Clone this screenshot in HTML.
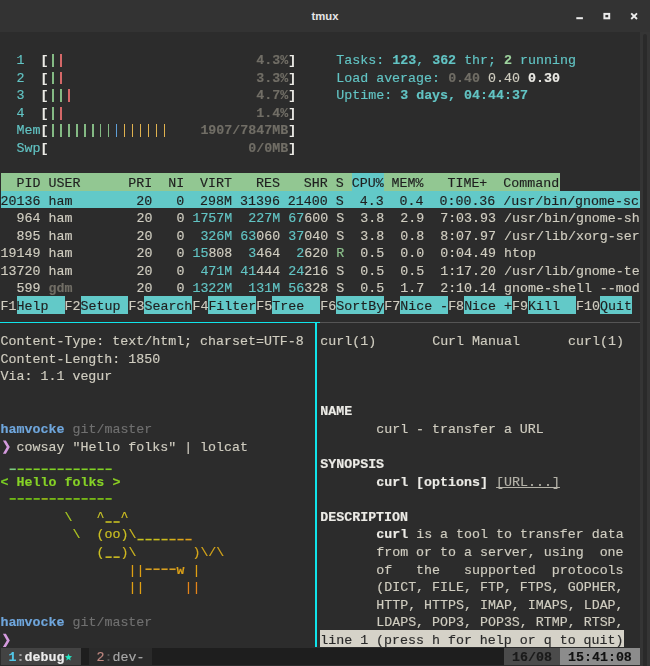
<!DOCTYPE html>
<html><head><meta charset="utf-8"><style>
html,body{margin:0;padding:0;}
body{width:650px;height:666px;overflow:hidden;position:relative;background:#353535;font-family:"Liberation Mono",monospace;}
#tb{position:absolute;left:0;top:0;width:650px;height:32px;background:#333333;}
#title{position:absolute;left:0;top:0;width:650px;height:32px;text-align:center;font:bold 11.3px/32px "Liberation Sans",sans-serif;color:#e6e6e6;}
#term{position:absolute;left:0;top:32px;width:640px;height:634px;background:#2c2c2c;}
#sb{position:absolute;left:643px;top:34px;width:4px;height:640px;background:#2a2a2a;border-radius:2px;}
.b{position:absolute;}
.s{position:absolute;white-space:pre;-webkit-text-stroke:0.15px;font-size:13.318px;line-height:17.575px;height:17.575px;}
.w{font-weight:bold;}
#txt{position:absolute;left:0;top:0;width:650px;height:666px;will-change:transform;}
.u{text-decoration:underline;text-underline-offset:1px;text-decoration-skip-ink:none;text-decoration-thickness:1px;}
</style></head><body>
<div id="tb"></div>
<div id="title">tmux</div>
<svg style="position:absolute;left:0;top:0" width="650" height="32">
<rect x="576.3" y="17.2" width="6.6" height="2" fill="#ececec"/>
<rect x="604.4" y="13.9" width="4.8" height="4.4" fill="none" stroke="#ececec" stroke-width="2"/>
<path d="M631.2 13.4 L637 19 M637 13.4 L631.2 19" stroke="#ececec" stroke-width="1.9"/>
</svg>
<div id="term"></div>
<div id="sb"></div>

<div class="b" style="left:0.60px;top:172.98px;width:559.44px;height:17.57px;background:#92c792"></div>
<div class="b" style="left:352.25px;top:172.98px;width:31.97px;height:17.57px;background:#62c9c8"></div>
<div class="b" style="left:0.60px;top:190.55px;width:639.36px;height:17.57px;background:#62c9c8"></div>
<div class="b" style="left:16.58px;top:296.00px;width:47.95px;height:17.57px;background:#62c9c8"></div>
<div class="b" style="left:80.52px;top:296.00px;width:47.95px;height:17.57px;background:#62c9c8"></div>
<div class="b" style="left:144.46px;top:296.00px;width:47.95px;height:17.57px;background:#62c9c8"></div>
<div class="b" style="left:208.39px;top:296.00px;width:47.95px;height:17.57px;background:#62c9c8"></div>
<div class="b" style="left:272.33px;top:296.00px;width:47.95px;height:17.57px;background:#62c9c8"></div>
<div class="b" style="left:336.26px;top:296.00px;width:47.95px;height:17.57px;background:#62c9c8"></div>
<div class="b" style="left:400.20px;top:296.00px;width:47.95px;height:17.57px;background:#62c9c8"></div>
<div class="b" style="left:464.14px;top:296.00px;width:47.95px;height:17.57px;background:#62c9c8"></div>
<div class="b" style="left:528.07px;top:296.00px;width:47.95px;height:17.57px;background:#62c9c8"></div>
<div class="b" style="left:600.00px;top:296.00px;width:31.97px;height:17.57px;background:#62c9c8"></div>
<div class="b" style="left:320.28px;top:629.93px;width:303.70px;height:17.57px;background:#d5d2c8"></div>
<div class="b" style="left:0.60px;top:647.50px;width:639.36px;height:17.57px;background:#1e1e1e"></div>
<div class="b" style="left:0.60px;top:647.50px;width:79.92px;height:17.57px;background:#434343"></div>
<div class="b" style="left:88.51px;top:647.50px;width:63.94px;height:17.57px;background:#2a2a2a"></div>
<div class="b" style="left:504.10px;top:647.50px;width:55.94px;height:17.57px;background:#4b4b4b"></div>
<div class="b" style="left:560.04px;top:647.50px;width:79.92px;height:17.57px;background:#8c8c8c"></div>
<div class="b" style="left:0;top:321.62px;width:320px;height:1.5px;background:#10e4ea"></div>
<div class="b" style="left:320px;top:321.62px;width:320px;height:1.5px;background:#555"></div>
<div class="b" style="left:315px;top:321.62px;width:2px;height:325.89px;background:#10e4ea"></div>
<div id="txt">
<div class="s" style="left:16.58px;top:51.95px;color:#62c4c4">1</div>
<div class="s w" style="left:40.56px;top:51.95px;color:#ecebe6">[</div>
<div class="s w" style="left:256.34px;top:51.95px;color:#716e66">4.3%</div>
<div class="s w" style="left:288.31px;top:51.95px;color:#ecebe6">]</div>
<div class="s" style="left:16.58px;top:69.53px;color:#62c4c4">2</div>
<div class="s w" style="left:40.56px;top:69.53px;color:#ecebe6">[</div>
<div class="s w" style="left:256.34px;top:69.53px;color:#716e66">3.3%</div>
<div class="s w" style="left:288.31px;top:69.53px;color:#ecebe6">]</div>
<div class="s" style="left:16.58px;top:87.10px;color:#62c4c4">3</div>
<div class="s w" style="left:40.56px;top:87.10px;color:#ecebe6">[</div>
<div class="s w" style="left:256.34px;top:87.10px;color:#716e66">4.7%</div>
<div class="s w" style="left:288.31px;top:87.10px;color:#ecebe6">]</div>
<div class="s" style="left:16.58px;top:104.68px;color:#62c4c4">4</div>
<div class="s w" style="left:40.56px;top:104.68px;color:#ecebe6">[</div>
<div class="s w" style="left:256.34px;top:104.68px;color:#716e66">1.4%</div>
<div class="s w" style="left:288.31px;top:104.68px;color:#ecebe6">]</div>
<div class="s" style="left:16.58px;top:122.25px;color:#62c4c4">Mem</div>
<div class="s w" style="left:40.56px;top:122.25px;color:#ecebe6">[</div>
<div class="s w" style="left:200.40px;top:122.25px;color:#716e66">1907/7847MB</div>
<div class="s w" style="left:288.31px;top:122.25px;color:#ecebe6">]</div>
<div class="s" style="left:16.58px;top:139.83px;color:#62c4c4">Swp</div>
<div class="s w" style="left:40.56px;top:139.83px;color:#ecebe6">[</div>
<div class="s w" style="left:248.35px;top:139.83px;color:#716e66">0/0MB</div>
<div class="s w" style="left:288.31px;top:139.83px;color:#ecebe6">]</div>
<div class="s" style="left:336.26px;top:51.95px;color:#62c4c4">Tasks:</div>
<div class="s w" style="left:392.21px;top:51.95px;color:#62c4c4">123</div>
<div class="s" style="left:416.18px;top:51.95px;color:#62c4c4">,</div>
<div class="s w" style="left:432.17px;top:51.95px;color:#62c4c4">362</div>
<div class="s" style="left:464.14px;top:51.95px;color:#62c4c4">thr;</div>
<div class="s w" style="left:504.10px;top:51.95px;color:#9ed39e">2</div>
<div class="s" style="left:520.08px;top:51.95px;color:#62c4c4">running</div>
<div class="s" style="left:336.26px;top:69.53px;color:#62c4c4">Load average:</div>
<div class="s w" style="left:448.15px;top:69.53px;color:#716e66">0.40</div>
<div class="s" style="left:488.11px;top:69.53px;color:#d0cdc0">0.40</div>
<div class="s w" style="left:528.07px;top:69.53px;color:#ecebe6">0.30</div>
<div class="s" style="left:336.26px;top:87.10px;color:#62c4c4">Uptime:</div>
<div class="s w" style="left:400.20px;top:87.10px;color:#62c4c4">3 days, 04:44:37</div>
<div class="s" style="left:0.60px;top:174.98px;color:#1f1f1f">  PID USER      PRI  NI  VIRT   RES   SHR S CPU% MEM%   TIME+  Command</div>
<div class="s" style="left:0.60px;top:192.55px;color:#1f1f1f">20136 ham        20   0  298M 31396 21400 S  4.3  0.4  0:00.36 /usr/bin/gnome-sc</div>
<div class="s" style="left:16.58px;top:210.13px;color:#d0cdc0">964</div>
<div class="s" style="left:48.55px;top:210.13px;color:#d0cdc0">ham</div>
<div class="s" style="left:136.46px;top:210.13px;color:#d0cdc0">20</div>
<div class="s" style="left:176.42px;top:210.13px;color:#d0cdc0">0</div>
<div class="s" style="left:192.41px;top:210.13px;color:#62c4c4">1757M</div>
<div class="s" style="left:248.35px;top:210.13px;color:#62c4c4">227M</div>
<div class="s" style="left:288.31px;top:210.13px;color:#62c4c4">67</div>
<div class="s" style="left:304.30px;top:210.13px;color:#d0cdc0">600</div>
<div class="s" style="left:336.26px;top:210.13px;color:#d0cdc0">S</div>
<div class="s" style="left:360.24px;top:210.13px;color:#d0cdc0">3.8</div>
<div class="s" style="left:400.20px;top:210.13px;color:#d0cdc0">2.9</div>
<div class="s" style="left:440.16px;top:210.13px;color:#d0cdc0">7:03.93</div>
<div class="s" style="left:504.10px;top:210.13px;color:#d0cdc0">/usr/bin/gnome-sh</div>
<div class="s" style="left:16.58px;top:227.70px;color:#d0cdc0">895</div>
<div class="s" style="left:48.55px;top:227.70px;color:#d0cdc0">ham</div>
<div class="s" style="left:136.46px;top:227.70px;color:#d0cdc0">20</div>
<div class="s" style="left:176.42px;top:227.70px;color:#d0cdc0">0</div>
<div class="s" style="left:200.40px;top:227.70px;color:#62c4c4">326M</div>
<div class="s" style="left:240.36px;top:227.70px;color:#62c4c4">63</div>
<div class="s" style="left:256.34px;top:227.70px;color:#d0cdc0">060</div>
<div class="s" style="left:288.31px;top:227.70px;color:#62c4c4">37</div>
<div class="s" style="left:304.30px;top:227.70px;color:#d0cdc0">040</div>
<div class="s" style="left:336.26px;top:227.70px;color:#d0cdc0">S</div>
<div class="s" style="left:360.24px;top:227.70px;color:#d0cdc0">3.8</div>
<div class="s" style="left:400.20px;top:227.70px;color:#d0cdc0">0.8</div>
<div class="s" style="left:440.16px;top:227.70px;color:#d0cdc0">8:07.97</div>
<div class="s" style="left:504.10px;top:227.70px;color:#d0cdc0">/usr/lib/xorg-ser</div>
<div class="s" style="left:0.60px;top:245.28px;color:#d0cdc0">19149</div>
<div class="s" style="left:48.55px;top:245.28px;color:#d0cdc0">ham</div>
<div class="s" style="left:136.46px;top:245.28px;color:#d0cdc0">20</div>
<div class="s" style="left:176.42px;top:245.28px;color:#d0cdc0">0</div>
<div class="s" style="left:192.41px;top:245.28px;color:#62c4c4">15</div>
<div class="s" style="left:208.39px;top:245.28px;color:#d0cdc0">808</div>
<div class="s" style="left:248.35px;top:245.28px;color:#62c4c4">3</div>
<div class="s" style="left:256.34px;top:245.28px;color:#d0cdc0">464</div>
<div class="s" style="left:296.30px;top:245.28px;color:#62c4c4">2</div>
<div class="s" style="left:304.30px;top:245.28px;color:#d0cdc0">620</div>
<div class="s" style="left:336.26px;top:245.28px;color:#8cc08c">R</div>
<div class="s" style="left:360.24px;top:245.28px;color:#d0cdc0">0.5</div>
<div class="s" style="left:400.20px;top:245.28px;color:#d0cdc0">0.0</div>
<div class="s" style="left:440.16px;top:245.28px;color:#d0cdc0">0:04.49</div>
<div class="s" style="left:504.10px;top:245.28px;color:#d0cdc0">htop</div>
<div class="s" style="left:0.60px;top:262.86px;color:#d0cdc0">13720</div>
<div class="s" style="left:48.55px;top:262.86px;color:#d0cdc0">ham</div>
<div class="s" style="left:136.46px;top:262.86px;color:#d0cdc0">20</div>
<div class="s" style="left:176.42px;top:262.86px;color:#d0cdc0">0</div>
<div class="s" style="left:200.40px;top:262.86px;color:#62c4c4">471M</div>
<div class="s" style="left:240.36px;top:262.86px;color:#62c4c4">41</div>
<div class="s" style="left:256.34px;top:262.86px;color:#d0cdc0">444</div>
<div class="s" style="left:288.31px;top:262.86px;color:#62c4c4">24</div>
<div class="s" style="left:304.30px;top:262.86px;color:#d0cdc0">216</div>
<div class="s" style="left:336.26px;top:262.86px;color:#d0cdc0">S</div>
<div class="s" style="left:360.24px;top:262.86px;color:#d0cdc0">0.5</div>
<div class="s" style="left:400.20px;top:262.86px;color:#d0cdc0">0.5</div>
<div class="s" style="left:440.16px;top:262.86px;color:#d0cdc0">1:17.20</div>
<div class="s" style="left:504.10px;top:262.86px;color:#d0cdc0">/usr/lib/gnome-te</div>
<div class="s" style="left:16.58px;top:280.43px;color:#d0cdc0">599</div>
<div class="s w" style="left:48.55px;top:280.43px;color:#716e66">gdm</div>
<div class="s" style="left:136.46px;top:280.43px;color:#d0cdc0">20</div>
<div class="s" style="left:176.42px;top:280.43px;color:#d0cdc0">0</div>
<div class="s" style="left:192.41px;top:280.43px;color:#62c4c4">1322M</div>
<div class="s" style="left:248.35px;top:280.43px;color:#62c4c4">131M</div>
<div class="s" style="left:288.31px;top:280.43px;color:#62c4c4">56</div>
<div class="s" style="left:304.30px;top:280.43px;color:#d0cdc0">328</div>
<div class="s" style="left:336.26px;top:280.43px;color:#d0cdc0">S</div>
<div class="s" style="left:360.24px;top:280.43px;color:#d0cdc0">0.5</div>
<div class="s" style="left:400.20px;top:280.43px;color:#d0cdc0">1.7</div>
<div class="s" style="left:440.16px;top:280.43px;color:#d0cdc0">2:10.14</div>
<div class="s" style="left:504.10px;top:280.43px;color:#d0cdc0">gnome-shell --mod</div>
<div class="s" style="left:0.60px;top:298.00px;color:#d0cdc0">F1</div>
<div class="s" style="left:16.58px;top:298.00px;color:#1f1f1f">Help</div>
<div class="s" style="left:64.54px;top:298.00px;color:#d0cdc0">F2</div>
<div class="s" style="left:80.52px;top:298.00px;color:#1f1f1f">Setup</div>
<div class="s" style="left:128.47px;top:298.00px;color:#d0cdc0">F3</div>
<div class="s" style="left:144.46px;top:298.00px;color:#1f1f1f">Search</div>
<div class="s" style="left:192.41px;top:298.00px;color:#d0cdc0">F4</div>
<div class="s" style="left:208.39px;top:298.00px;color:#1f1f1f">Filter</div>
<div class="s" style="left:256.34px;top:298.00px;color:#d0cdc0">F5</div>
<div class="s" style="left:272.33px;top:298.00px;color:#1f1f1f">Tree</div>
<div class="s" style="left:320.28px;top:298.00px;color:#d0cdc0">F6</div>
<div class="s" style="left:336.26px;top:298.00px;color:#1f1f1f">SortBy</div>
<div class="s" style="left:384.22px;top:298.00px;color:#d0cdc0">F7</div>
<div class="s" style="left:400.20px;top:298.00px;color:#1f1f1f">Nice -</div>
<div class="s" style="left:448.15px;top:298.00px;color:#d0cdc0">F8</div>
<div class="s" style="left:464.14px;top:298.00px;color:#1f1f1f">Nice +</div>
<div class="s" style="left:512.09px;top:298.00px;color:#d0cdc0">F9</div>
<div class="s" style="left:528.07px;top:298.00px;color:#1f1f1f">Kill</div>
<div class="s" style="left:576.02px;top:298.00px;color:#d0cdc0">F10</div>
<div class="s" style="left:600.00px;top:298.00px;color:#1f1f1f">Quit</div>
<div class="s" style="left:0.60px;top:333.15px;color:#d0cdc0">Content-Type: text/html; charset=UTF-8</div>
<div class="s" style="left:0.60px;top:350.73px;color:#d0cdc0">Content-Length: 1850</div>
<div class="s" style="left:0.60px;top:368.31px;color:#d0cdc0">Via: 1.1 vegur</div>
<div class="s w" style="left:0.60px;top:421.03px;color:#6fa6dc">hamvocke</div>
<div class="s" style="left:72.53px;top:421.03px;color:#707070">git/master</div>
<div class="s w" style="left:0.60px;top:614.36px;color:#6fa6dc">hamvocke</div>
<div class="s" style="left:72.53px;top:614.36px;color:#707070">git/master</div>
<div class="s" style="left:16.58px;top:438.60px;color:#d0cdc0">cowsay &quot;Hello folks&quot; | lolcat</div>
<div class="s w" style="left:0.60px;top:473.75px;color:#7cd024">&lt;</div>
<div class="s w" style="left:16.58px;top:473.75px;color:#86d226">Hello folks</div>
<div class="s w" style="left:112.49px;top:473.75px;color:#8ed024">&gt;</div>
<div class="s" style="left:64.54px;top:508.90px;color:#a8cc22">\</div>
<div class="s" style="left:96.50px;top:508.90px;color:#c8c428">^</div>
<div class="s" style="left:120.48px;top:508.90px;color:#d0c022">^</div>
<div class="s" style="left:72.53px;top:526.48px;color:#b4cc22">\</div>
<div class="s" style="left:96.50px;top:526.48px;color:#ccc022">(oo)</div>
<div class="s" style="left:128.47px;top:526.48px;color:#d0bc20">\</div>
<div class="s" style="left:96.50px;top:544.05px;color:#ccc022">(</div>
<div class="s" style="left:120.48px;top:544.05px;color:#d0b820">)\</div>
<div class="s" style="left:192.41px;top:544.05px;color:#d8a81a">)\/\</div>
<div class="s" style="left:128.47px;top:561.63px;color:#dea014">||</div>
<div class="s w" style="left:176.42px;top:561.63px;color:#dca018">w</div>
<div class="s" style="left:192.41px;top:561.63px;color:#e0a014">|</div>
<div class="s" style="left:128.47px;top:579.20px;color:#e0a014">||</div>
<div class="s" style="left:184.42px;top:579.20px;color:#e4841a">||</div>
<div class="s" style="left:320.28px;top:333.15px;color:#d0cdc0">curl(1)</div>
<div class="s" style="left:432.17px;top:333.15px;color:#d0cdc0">Curl Manual</div>
<div class="s" style="left:568.03px;top:333.15px;color:#d0cdc0">curl(1)</div>
<div class="s w" style="left:320.28px;top:403.45px;color:#ecebe6">NAME</div>
<div class="s" style="left:376.22px;top:421.03px;color:#d0cdc0">curl - transfer a URL</div>
<div class="s w" style="left:320.28px;top:456.18px;color:#ecebe6">SYNOPSIS</div>
<div class="s w" style="left:376.22px;top:473.75px;color:#ecebe6">curl [options]</div>
<div class="s u" style="left:496.10px;top:473.75px;color:#b4b2a8">[URL...]</div>
<div class="s w" style="left:320.28px;top:508.90px;color:#ecebe6">DESCRIPTION</div>
<div class="s w" style="left:376.22px;top:526.48px;color:#ecebe6">curl</div>
<div class="s" style="left:416.18px;top:526.48px;color:#d0cdc0">is a tool to transfer data</div>
<div class="s" style="left:376.22px;top:544.05px;color:#d0cdc0">from or to a server, using  one</div>
<div class="s" style="left:376.22px;top:561.63px;color:#d0cdc0">of   the   supported  protocols</div>
<div class="s" style="left:376.22px;top:579.20px;color:#d0cdc0">(DICT, FILE, FTP, FTPS, GOPHER,</div>
<div class="s" style="left:376.22px;top:596.78px;color:#d0cdc0">HTTP, HTTPS, IMAP, IMAPS, LDAP,</div>
<div class="s" style="left:376.22px;top:614.36px;color:#d0cdc0">LDAPS, POP3, POP3S, RTMP, RTSP,</div>
<div class="s" style="left:320.28px;top:631.93px;color:#2a2a2a">line 1 (press h for help or q to quit)</div>
<div class="s w" style="left:8.59px;top:649.11px;color:#52c6e6">1</div>
<div class="s w" style="left:16.58px;top:649.11px;color:#a0a0a0">:</div>
<div class="s w" style="left:24.58px;top:649.11px;color:#ececec">debug</div>
<div class="s" style="left:96.50px;top:649.11px;color:#c08880">2</div>
<div class="s" style="left:104.50px;top:649.11px;color:#555555">:</div>
<div class="s" style="left:112.49px;top:649.11px;color:#a8a8a8">dev-</div>
<div class="s w" style="left:512.09px;top:649.11px;color:#1a1a1a">16/08</div>
<div class="s w" style="left:568.03px;top:649.11px;color:#111111">15:41:08</div>
</div>
<svg style="position:absolute;left:0;top:0" width="650" height="666"><rect x="9.59" y="468.48" width="6.2" height="1.6" fill="#7ccb80"/><rect x="17.58" y="468.48" width="6.2" height="1.6" fill="#80d224"/><rect x="25.58" y="468.48" width="6.2" height="1.6" fill="#80d224"/><rect x="33.57" y="468.48" width="6.2" height="1.6" fill="#80d224"/><rect x="41.56" y="468.48" width="6.2" height="1.6" fill="#80d224"/><rect x="49.55" y="468.48" width="6.2" height="1.6" fill="#80d224"/><rect x="57.54" y="468.48" width="6.2" height="1.6" fill="#80d224"/><rect x="65.54" y="468.48" width="6.2" height="1.6" fill="#80d224"/><rect x="73.53" y="468.48" width="6.2" height="1.6" fill="#80d224"/><rect x="81.52" y="468.48" width="6.2" height="1.6" fill="#80d224"/><rect x="89.51" y="468.48" width="6.2" height="1.6" fill="#80d224"/><rect x="97.50" y="468.48" width="6.2" height="1.6" fill="#80d224"/><rect x="105.50" y="468.48" width="6.2" height="1.6" fill="#80d224"/><rect x="9.59" y="498.13" width="6.2" height="1.6" fill="#7acc14"/><rect x="17.58" y="498.13" width="6.2" height="1.6" fill="#7acc14"/><rect x="25.58" y="498.13" width="6.2" height="1.6" fill="#7acc14"/><rect x="33.57" y="498.13" width="6.2" height="1.6" fill="#7acc14"/><rect x="41.56" y="498.13" width="6.2" height="1.6" fill="#9cc414"/><rect x="49.55" y="498.13" width="6.2" height="1.6" fill="#82cc14"/><rect x="57.54" y="498.13" width="6.2" height="1.6" fill="#82cc14"/><rect x="65.54" y="498.13" width="6.2" height="1.6" fill="#82cc14"/><rect x="73.53" y="498.13" width="6.2" height="1.6" fill="#82cc14"/><rect x="81.52" y="498.13" width="6.2" height="1.6" fill="#82cc14"/><rect x="89.51" y="498.13" width="6.2" height="1.6" fill="#82cc14"/><rect x="97.50" y="498.13" width="6.2" height="1.6" fill="#82cc14"/><rect x="105.50" y="498.13" width="6.2" height="1.6" fill="#82cc14"/><rect x="105.50" y="521.20" width="6.2" height="1.6" fill="#c8c022"/><rect x="113.49" y="521.20" width="6.2" height="1.6" fill="#c8c022"/><rect x="137.46" y="538.78" width="6.2" height="1.6" fill="#c8c21c"/><rect x="145.46" y="538.78" width="6.2" height="1.6" fill="#c8c21c"/><rect x="153.45" y="538.78" width="6.2" height="1.6" fill="#cabe1c"/><rect x="161.44" y="538.78" width="6.2" height="1.6" fill="#ccbc1c"/><rect x="169.43" y="538.78" width="6.2" height="1.6" fill="#d4b01a"/><rect x="177.42" y="538.78" width="6.2" height="1.6" fill="#dca418"/><rect x="185.42" y="538.78" width="6.2" height="1.6" fill="#e0a018"/><rect x="105.50" y="556.35" width="6.2" height="1.6" fill="#ccbc22"/><rect x="113.49" y="556.35" width="6.2" height="1.6" fill="#ccbc22"/><rect x="145.46" y="568.43" width="6.2" height="1.6" fill="#d8a020"/><rect x="153.45" y="568.43" width="6.2" height="1.6" fill="#d8a020"/><rect x="161.44" y="568.43" width="6.2" height="1.6" fill="#d8a020"/><rect x="169.43" y="568.43" width="6.2" height="1.6" fill="#d8a020"/></svg>
<div class="b" style="left:51.75px;top:53.95px;width:1.8px;height:12.9px;background:#84ba84"></div>
<div class="b" style="left:59.74px;top:53.95px;width:1.8px;height:12.9px;background:#d46868"></div>
<div class="b" style="left:51.75px;top:71.53px;width:1.8px;height:12.9px;background:#84ba84"></div>
<div class="b" style="left:59.74px;top:71.53px;width:1.8px;height:12.9px;background:#d46868"></div>
<div class="b" style="left:51.75px;top:89.10px;width:1.8px;height:12.9px;background:#84ba84"></div>
<div class="b" style="left:59.74px;top:89.10px;width:1.8px;height:12.9px;background:#84ba84"></div>
<div class="b" style="left:67.74px;top:89.10px;width:1.8px;height:12.9px;background:#d46868"></div>
<div class="b" style="left:51.75px;top:106.68px;width:1.8px;height:12.9px;background:#84ba84"></div>
<div class="b" style="left:59.74px;top:106.68px;width:1.8px;height:12.9px;background:#d46868"></div>
<div class="b" style="left:51.75px;top:124.25px;width:1.8px;height:12.9px;background:#84ba84"></div>
<div class="b" style="left:59.74px;top:124.25px;width:1.8px;height:12.9px;background:#84ba84"></div>
<div class="b" style="left:67.74px;top:124.25px;width:1.8px;height:12.9px;background:#84ba84"></div>
<div class="b" style="left:75.73px;top:124.25px;width:1.8px;height:12.9px;background:#84ba84"></div>
<div class="b" style="left:83.72px;top:124.25px;width:1.8px;height:12.9px;background:#84ba84"></div>
<div class="b" style="left:91.71px;top:124.25px;width:1.8px;height:12.9px;background:#84ba84"></div>
<div class="b" style="left:99.70px;top:124.25px;width:1.8px;height:12.9px;background:#84ba84"></div>
<div class="b" style="left:107.70px;top:124.25px;width:1.8px;height:12.9px;background:#84ba84"></div>
<div class="b" style="left:115.69px;top:124.25px;width:1.8px;height:12.9px;background:#5f9fd8"></div>
<div class="b" style="left:123.68px;top:124.25px;width:1.8px;height:12.9px;background:#e0b24f"></div>
<div class="b" style="left:131.67px;top:124.25px;width:1.8px;height:12.9px;background:#e0b24f"></div>
<div class="b" style="left:139.66px;top:124.25px;width:1.8px;height:12.9px;background:#e0b24f"></div>
<div class="b" style="left:147.66px;top:124.25px;width:1.8px;height:12.9px;background:#e0b24f"></div>
<div class="b" style="left:155.65px;top:124.25px;width:1.8px;height:12.9px;background:#e0b24f"></div>
<div class="b" style="left:163.64px;top:124.25px;width:1.8px;height:12.9px;background:#e0b24f"></div>
<svg style="position:absolute;left:0;top:0" width="650" height="666"><polygon points="68.50,653.70 69.50,656.02 72.02,656.26 70.12,657.93 70.67,660.39 68.50,659.10 66.33,660.39 66.88,657.93 64.98,656.26 67.50,656.02" fill="#22e6c2"/><polygon points="2.90,440.50 5.90,440.50 9.80,447.10 5.90,453.70 2.90,453.70 6.80,447.10" fill="#d49ade"/><polygon points="2.90,633.83 5.90,633.83 9.80,640.43 5.90,647.03 2.90,647.03 6.80,640.43" fill="#d49ade"/></svg>
</body></html>
